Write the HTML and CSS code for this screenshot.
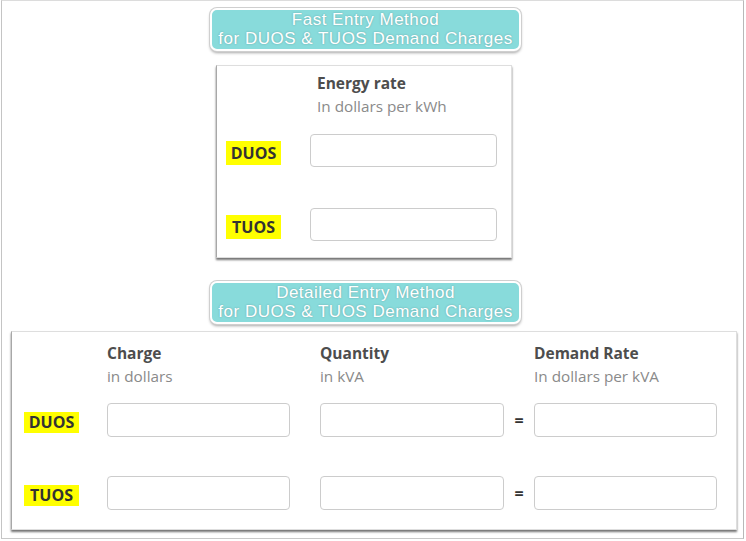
FILE: index.html
```html
<!DOCTYPE html>
<html>
<head>
<meta charset="utf-8">
<link rel="stylesheet" href="styles.css">
</head>
<body>
<div class="frame">
  <div class="banner banner-top"><div class="bline">Fast Entry Method</div><div class="bline">for DUOS &amp; TUOS Demand Charges</div></div>
  <div class="card card-fast">
    <div class="head head-fast">
      <div class="head-title">Energy rate</div>
      <div class="head-sub">In dollars per kWh</div>
    </div>
    <div class="fast-row">
      <span class="tag tag-fast">DUOS</span>
      <input class="field field-fast" type="text">
    </div>
    <div class="fast-row fast-row-2">
      <span class="tag tag-fast">TUOS</span>
      <input class="field field-fast" type="text">
    </div>
  </div>
  <div class="banner banner-mid"><div class="bline">Detailed Entry Method</div><div class="bline">for DUOS &amp; TUOS Demand Charges</div></div>
  <div class="card card-detail">
    <div class="grid">
      <div class="head c2 r1"><div class="head-title">Charge</div><div class="head-sub">in dollars</div></div>
      <div class="head c4 r1"><div class="head-title">Quantity</div><div class="head-sub">in kVA</div></div>
      <div class="head c6 r1"><div class="head-title">Demand Rate</div><div class="head-sub">In dollars per kVA</div></div>

      <div class="cell-tag c1 r2"><span class="tag tag-detail">DUOS</span></div>
      <input class="field field-detail c2 r2" type="text">
      <input class="field field-detail c4 r2" type="text">
      <div class="eq c5 r2">=</div>
      <input class="field field-detail c6 r2" type="text">

      <div class="cell-tag c1 r4"><span class="tag tag-detail">TUOS</span></div>
      <input class="field field-detail c2 r4" type="text">
      <input class="field field-detail c4 r4" type="text">
      <div class="eq c5 r4">=</div>
      <input class="field field-detail c6 r4" type="text">
    </div>
  </div>
</div>
</body>
</html>
```

FILE: styles.css
```css
html, body {
  margin: 0;
  padding: 0;
  background: #ffffff;
}

body {
  font-family: "Open Sans", "DejaVu Sans", sans-serif;
}

.frame {
  box-sizing: border-box;
  margin-left: 1px;
  width: 743px;
  height: 539px;
  border: 1px solid #dcdcdc;
  border-left-color: #c4c4c4;
  border-right-color: #b8b8b8;
  border-bottom-color: #c8c8c8;
  display: flex;
  flex-direction: column;
  align-items: flex-start;
}

.banner {
  box-sizing: border-box;
  width: 311px;
  height: 43px;
  margin-left: 208px;
  padding: 0 0 1px;
  border: 2px solid #ffffff;
  border-radius: 7px;
  background: #88dbdb;
  box-shadow: 0 0 0 1px #cfcfcf, 0 2px 3px rgba(0, 0, 0, 0.35);
  color: #ffffff;
  font-family: "Liberation Sans", Arial, sans-serif;
  font-size: 17px;
  letter-spacing: 0.5px;
  text-align: center;
  white-space: nowrap;
  text-shadow: 0 0 2px rgba(0, 0, 0, 0.25);
}

.bline {
  height: 19px;
  line-height: 19px;
}

.banner-top {
  margin-top: 7px;
}

.banner-mid {
  margin-top: 23px;
}

.card {
  box-sizing: border-box;
  background: #ffffff;
  border: 1px solid #dedede;
  border-left-color: #a8a8a8;
  box-shadow: 0 2px 2px rgba(0, 0, 0, 0.55);
}

.card-fast {
  width: 296px;
  height: 193px;
  margin-top: 14px;
  margin-left: 214px;
  padding: 6px 0 0 9px;
}

.card-detail {
  width: 726px;
  height: 199px;
  margin-top: 7px;
  margin-left: 9px;
  padding: 10px 0 0 12px;
}

.head-title {
  font-size: 15.5px;
  font-weight: 700;
  line-height: 22px;
  color: #4d4d4d;
  white-space: nowrap;
}

.head-sub {
  margin-top: 1px;
  font-size: 15.3px;
  line-height: 22px;
  color: #8a8a8a;
  white-space: nowrap;
}

.head-fast {
  margin-left: 91px;
}

.fast-row {
  display: flex;
  align-items: center;
  margin-top: 17px;
}

.fast-row-2 {
  margin-top: 41px;
}

.tag {
  display: flex;
  align-items: center;
  justify-content: center;
  width: 55px;
  background: #ffff00;
  color: #333333;
  font-size: 16px;
  font-weight: 700;
}

.tag-fast {
  height: 24px;
  margin-top: 5px;
}

.tag-detail {
  height: 21px;
  margin-top: 4px;
}

.field {
  box-sizing: border-box;
  margin: 0;
  padding: 0;
  border: 1px solid #cccccc;
  border-radius: 4px;
  background: #ffffff;
  outline: none;
}

.field-fast {
  width: 187px;
  height: 33px;
  margin-left: 29px;
}

.grid {
  display: grid;
  grid-template-columns: 83px 183px 30px 184px 30px 183px;
  grid-template-rows: 61px 34px 39px 34px;
}

.c1 { grid-column: 1; }
.c2 { grid-column: 2; }
.c4 { grid-column: 4; }
.c5 { grid-column: 5; }
.c6 { grid-column: 6; }
.r1 { grid-row: 1; }
.r2 { grid-row: 2; }
.r4 { grid-row: 4; }

.field-detail {
  width: 100%;
  height: 34px;
}

.cell-tag {
  display: flex;
  align-items: center;
  height: 34px;
}

.eq {
  display: flex;
  align-items: center;
  justify-content: center;
  height: 34px;
  font-size: 16px;
  font-weight: 700;
  color: #333333;
}
```
